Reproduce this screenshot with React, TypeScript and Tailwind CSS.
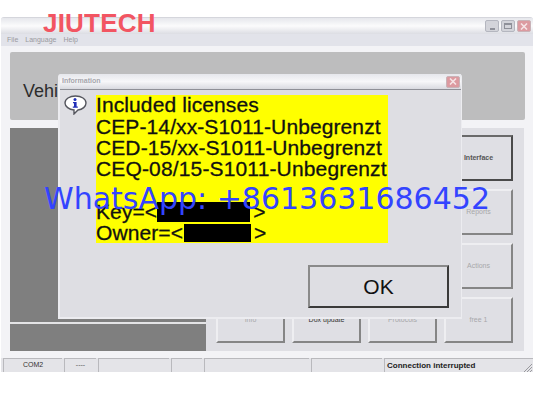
const rows = [
  ['', '', '', 'Interface'],
  ['', '', '', 'Reports'],
  ['', '', '', 'Actions'],
  ['Info', 'Dox update', 'Protocols', 'free 1'],
];

const statusCells = [
  { w: 'w-[59px]', text: 'COM2', cls: 'text-[#333]' },
  { w: 'w-[32px]', text: '----', cls: 'text-[#555]' },
  { w: 'w-[71px]', text: '', cls: '' },
  { w: 'w-[31px]', text: '', cls: '' },
  { w: 'w-[105px]', text: '', cls: '' },
  { w: 'w-[71px]', text: '', cls: '' },
];

function WinButton({ kind }: { kind: 'min' | 'max' | 'close' }) {
  if (kind === 'close') {
    return (
      <div className="w-[14px] h-[12px] rounded-[2px] bg-[#dc9aa0] border border-[#c9b3b8] flex items-center justify-center">
        <svg width="8" height="7" viewBox="0 0 8 7">
          <path d="M1 0.5 L7 6.5 M7 0.5 L1 6.5" stroke="#f6e4e6" strokeWidth="1.6" />
        </svg>
      </div>
    );
  }
  return (
    <div className="w-[14px] h-[12px] rounded-[2px] bg-[#d3d4da] border border-[#b4b6bf] flex items-center justify-center">
      {kind === 'min' ? (
        <div className="w-[5px] h-[2px] bg-[#8e9099] mt-[5px]" />
      ) : (
        <div className="w-[8px] h-[6px] border border-[#8e9099] border-t-2" />
      )}
    </div>
  );
}

function InfoIcon() {
  return (
    <svg width="23" height="20" viewBox="0 0 23 20">
      <path
        d="M11.5 1 C17.5 1 22 4 22 8 C22 11.5 18.5 14.5 14 15 L10 19 L10 15 C5 14.5 1 11.5 1 8 C1 4 5.5 1 11.5 1 Z"
        fill="#ffffff"
        stroke="#55565e"
        strokeWidth="1.4"
      />
      <circle cx="11" cy="4.6" r="1.5" fill="#2230b8" />
      <path d="M9 7 H12.6 V11.6 H13.8 V12.8 H8.8 V11.6 H10 V8.2 H9 Z" fill="#2230b8" />
    </svg>
  );
}

export default function App() {
  return (
    <div className="relative w-[533px] h-[400px] bg-white overflow-hidden pt-[17px] pl-[1px] font-['Liberation_Sans',Arial,sans-serif]">
      {/* Brand */}
      <div className="absolute left-[43px] top-[8px] z-30 text-[26px] leading-[30px] font-bold tracking-[0.2px] text-[#f25562]">
        JIUTECH
      </div>

      {/* Main window */}
      <div className="w-[532px] h-[355px] flex flex-col bg-[#f0f0f3] border-t border-[#d5d6dc] rounded-t-[3px]">
        <div className="h-[16px] shrink-0 flex items-center justify-end gap-[2px] pr-[2px] bg-gradient-to-b from-[#e6e7ec] via-[#fbfbfc] to-[#dcdde3]">
          <WinButton kind="min" />
          <WinButton kind="max" />
          <WinButton kind="close" />
        </div>
        <div className="h-[12px] shrink-0 flex items-center gap-[7px] pl-[6px] bg-[#e2e3ea] text-[7px] text-[#9a9aa0]">
          <span>File</span>
          <span>Language</span>
          <span>Help</span>
        </div>

        <div className="flex-1 flex flex-col pl-[9px] pr-[8px] pt-[6px] bg-[#f3f3f6]">
          <div className="h-[68px] shrink-0 bg-[#bdbdbe] rounded-[2px] flex items-center pl-[13px] pt-[10px]">
            <span className="text-[18px] text-[#2c2c2c]">Vehicle</span>
          </div>

          <div className="mt-[8px] h-[223px] shrink-0 flex">
            <div className="w-[196px] flex flex-col">
              <div className="h-[194px] bg-[#7f7f7f]" />
              <div className="h-[2px] bg-[#e4e4e6]" />
              <div className="flex-1 bg-[#7f7f7f]" />
            </div>
            <div className="w-[318px] bg-[#dfdfe4] pl-[10px] pt-[7px]">
              <div className="grid grid-cols-[69px_69px_69px_69px] grid-rows-[46px_46px_46px_46px] gap-x-[7px] gap-y-[8px]">
                {rows.flat().map((label, i) => {
                  const active = label === 'Interface';
                  return (
                    <div
                      key={i}
                      className={
                        active
                          ? 'flex items-center justify-center border-2 border-[#4a4a4a] border-t-[#6a6a6a] bg-[#dfdfe4] text-[7px] font-bold text-[#555]'
                          : 'flex items-center justify-center border-2 border-t-[#eeeef1] border-l-[#eeeef1] border-r-[#858585] border-b-[#858585] bg-[#dfdfe4] text-[7px] ' +
                            (label === 'Dox update' ? 'text-[#333]' : 'text-[#a8a8aa]')
                      }
                    >
                      {label}
                    </div>
                  );
                })}
              </div>
            </div>
          </div>
        </div>

        {/* Status bar */}
        <div className="h-[20px] shrink-0 bg-[#f3f3f6] pt-[6px]">
          <div className="relative h-[14px] flex gap-[2px] pl-[2px] bg-[#e4e4e8] text-[7px]">
            {statusCells.map((c, i) => (
              <div
                key={i}
                className={`${c.w} flex items-center justify-center border-l border-t border-[#b9b9bd] ${c.cls}`}
              >
                {c.text}
              </div>
            ))}
            <div className="flex-1 flex items-center pl-[2px] border-l border-t border-[#b9b9bd] text-[8px] font-bold text-[#222]">
              Connection interrupted
            </div>
            <svg className="absolute right-[1px] bottom-0" width="9" height="9" viewBox="0 0 9 9">
              <path d="M1 9 L9 1 M4 9 L9 4 M7 9 L9 7" stroke="#9a9a9e" strokeWidth="1" />
            </svg>
          </div>
        </div>
      </div>

      {/* Information dialog */}
      <div className="absolute left-[58px] top-[74px] z-10 w-[404px] h-[245px] flex flex-col bg-[#dedee3] border-l-2 border-r border-b-2 border-[#ececf0] rounded-t-[3px]">
        <div className="h-[16px] shrink-0 flex items-center justify-between pl-[2px] pr-[1px] bg-gradient-to-b from-[#e6e7ec] via-[#f7f7f9] to-[#d9dae0] border-b border-[#8f9097]">
          <span className="text-[7px] font-bold text-[#a5a5ac]">Information</span>
          <WinButton kind="close" />
        </div>
        <div className="flex pt-[5px]">
          <div className="w-[36px] pl-[4px]">
            <InfoIcon />
          </div>
          <div className="w-[292px] h-[148px] bg-[#ffff00] text-[21px] leading-[21px] tracking-[0.1px] text-[#111] [-webkit-text-stroke:0.3px_#111] whitespace-nowrap">
            <div className="h-[21px] leading-[19px]">Included licenses</div>
            <div>CEP-14/xx-S1011-Unbegrenzt</div>
            <div>CED-15/xx-S1011-Unbegrenzt</div>
            <div className="tracking-[0.15px]">CEQ-08/15-S1011-Unbegrenzt</div>
            <div className="h-[22px]" />
            <div className="flex items-center">
              Key=&lt;
              <span className="w-[93px] h-[20px] mr-[3px] bg-black" />
              &gt;
            </div>
            <div className="flex items-center">
              Owner=&lt;
              <span className="w-[67px] h-[18px] ml-[1px] mr-[3px] bg-black" />
              &gt;
            </div>
          </div>
        </div>
        <div className="mt-[22px] ml-[248px] w-[141px] h-[43px] flex items-center justify-center border-2 border-t-[#8a8a8a] border-l-[#8a8a8a] border-r-[#3a3a3a] border-b-[#3a3a3a] bg-[#dedee3] text-[21px] text-[#111]">
          OK
        </div>
      </div>

      {/* WhatsApp overlay */}
      <div className="absolute left-[44px] top-[181px] z-20 whitespace-nowrap font-['DejaVu_Sans',sans-serif] text-[30px] leading-[36px] text-[#3344ff]">
        WhatsApp: +8613631686452
      </div>
    </div>
  );
}
